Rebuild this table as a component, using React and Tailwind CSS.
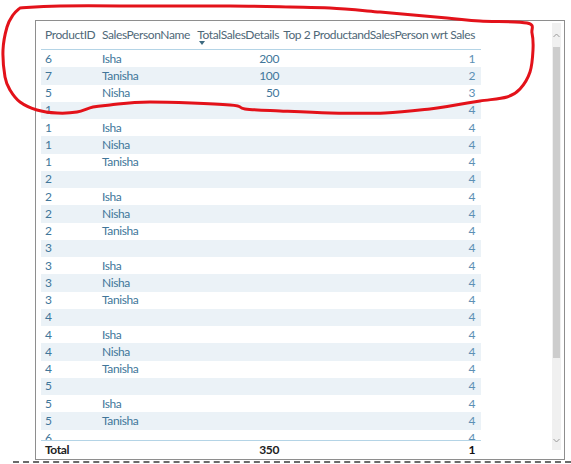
import React from "react";

const rows = [
  ["6", "Isha", "200", "1"],
  ["7", "Tanisha", "100", "2"],
  ["5", "Nisha", "50", "3"],
  ["1", "", "", "4"],
  ["1", "Isha", "", "4"],
  ["1", "Nisha", "", "4"],
  ["1", "Tanisha", "", "4"],
  ["2", "", "", "4"],
  ["2", "Isha", "", "4"],
  ["2", "Nisha", "", "4"],
  ["2", "Tanisha", "", "4"],
  ["3", "", "", "4"],
  ["3", "Isha", "", "4"],
  ["3", "Nisha", "", "4"],
  ["3", "Tanisha", "", "4"],
  ["4", "", "", "4"],
  ["4", "Isha", "", "4"],
  ["4", "Nisha", "", "4"],
  ["4", "Tanisha", "", "4"],
  ["5", "", "", "4"],
  ["5", "Isha", "", "4"],
  ["5", "Tanisha", "", "4"],
  ["6", "", "", "4"],
];

const pts = [
  [20, 8], [60, 6], [150, 6], [230, 6], [290, 7], [330, 8], [380, 12], [447, 18], [480, 21], [527, 23],
  [532, 33], [533, 50], [530, 72], [520, 89], [507, 97], [480, 101], [450, 106], [430, 109],
  [385, 113], [330, 113], [280, 111], [245, 109], [230, 105], [150, 102], [110, 105], [93, 107],
  [77, 112], [57, 113], [37, 110], [20, 102], [10, 90], [5, 77], [3, 50], [7, 27], [13, 15], [20, 8],
];

function smoothPath(p) {
  let d = `M${p[0][0]},${p[0][1]}`;
  for (let i = 0; i < p.length - 1; i++) {
    const p0 = p[i - 1] || p[i];
    const p1 = p[i];
    const p2 = p[i + 1];
    const p3 = p[i + 2] || p2;
    const c1x = p1[0] + (p2[0] - p0[0]) / 6;
    const c1y = p1[1] + (p2[1] - p0[1]) / 6;
    const c2x = p2[0] - (p3[0] - p1[0]) / 6;
    const c2y = p2[1] - (p3[1] - p1[1]) / 6;
    d += ` C${c1x},${c1y} ${c2x},${c2y} ${p2[0]},${p2[1]}`;
  }
  return d;
}

export default function App() {
  return (
    <div
      className="relative w-[571px] h-[464px] bg-white overflow-hidden tracking-[-0.4px]"
      style={{ fontFamily: "Lato, 'Noto Sans', sans-serif" }}
    >
      <div className="pt-[20px] pl-[35px]">
        <div className="w-[530px] h-[440px] border border-[#8e8e8e] flex">
          <div className="pl-[5px] w-[445px] flex flex-col">
            {/* header */}
            <div className="grid grid-cols-[57px_95px_90px_197px] h-[29px] items-center text-[12px] text-[#4f6878] border-b border-[#b4d4e6]">
              <div className="pl-[4px] whitespace-nowrap">ProductID</div>
              <div className="pl-[4px] whitespace-nowrap">SalesPersonName</div>
              <div className="relative pr-[4px] text-right whitespace-nowrap">
                TotalSalesDetails
                <svg className="absolute left-[6px] top-[15px]" width="6" height="4" viewBox="0 0 6 4">
                  <path d="M0,0 L6,0 L3,4 Z" fill="#3d6a80" />
                </svg>
              </div>
              <div className="pr-[5px] text-right whitespace-nowrap">Top 2 ProductandSalesPerson wrt Sales</div>
            </div>
            {/* body */}
            <div className="h-[390px] overflow-hidden">
              {rows.map((r, i) => (
                <div
                  key={i}
                  className={`grid grid-cols-[57px_95px_90px_197px] h-[17.25px] items-center text-[12px] leading-none text-[#41769a] ${
                    i % 2 === 1 ? "bg-[#ebf2f7]" : "bg-white"
                  }`}
                >
                  <div className="pl-[4px]">{r[0]}</div>
                  <div className="pl-[4px]">{r[1]}</div>
                  <div className="pr-[4px] text-right">{r[2]}</div>
                  <div className="pr-[5px] text-right text-[#5c90b5]">{r[3]}</div>
                </div>
              ))}
            </div>
            {/* total */}
            <div className="grid grid-cols-[57px_95px_90px_197px] h-[18px] items-center text-[12px] leading-none font-bold text-[#222] border-t border-[#b4d4e6]">
              <div className="pl-[4px]">Total</div>
              <div></div>
              <div className="pr-[4px] text-right">350</div>
              <div className="pr-[5px] text-right text-[#111]">1</div>
            </div>
          </div>
          <div className="flex-1" />
          {/* scrollbar */}
          <div className="w-[9px] mt-[2px] mb-[9px] mr-[3px] bg-[#f0f0f0] flex flex-col items-center">
            <div className="h-[24px] flex items-center justify-center">
              <svg width="7" height="5" viewBox="0 0 7 5">
                <path d="M0.5,4 L3.5,1 L6.5,4" fill="none" stroke="#9a9a9a" strokeWidth="1" />
              </svg>
            </div>
            <div className="w-[7px] h-[311px] bg-[#cdcdcd]" />
            <div className="flex-1" />
            <div className="h-[20px] flex items-center justify-center">
              <svg width="7" height="5" viewBox="0 0 7 5">
                <path d="M0.5,1 L3.5,4 L6.5,1" fill="none" stroke="#9a9a9a" strokeWidth="1" />
              </svg>
            </div>
          </div>
        </div>
      </div>
      <div className="ml-[13px] mt-[1px] w-[558px] border-t-2 border-dashed border-[#6a6a6a]" />
      <svg
        className="absolute left-0 top-0 pointer-events-none"
        width="571"
        height="464"
        viewBox="0 0 571 464"
      >
        <path d={smoothPath(pts)} fill="none" stroke="#e3121a" strokeWidth="3" strokeLinejoin="round" strokeLinecap="round" />
      </svg>
    </div>
  );
}
